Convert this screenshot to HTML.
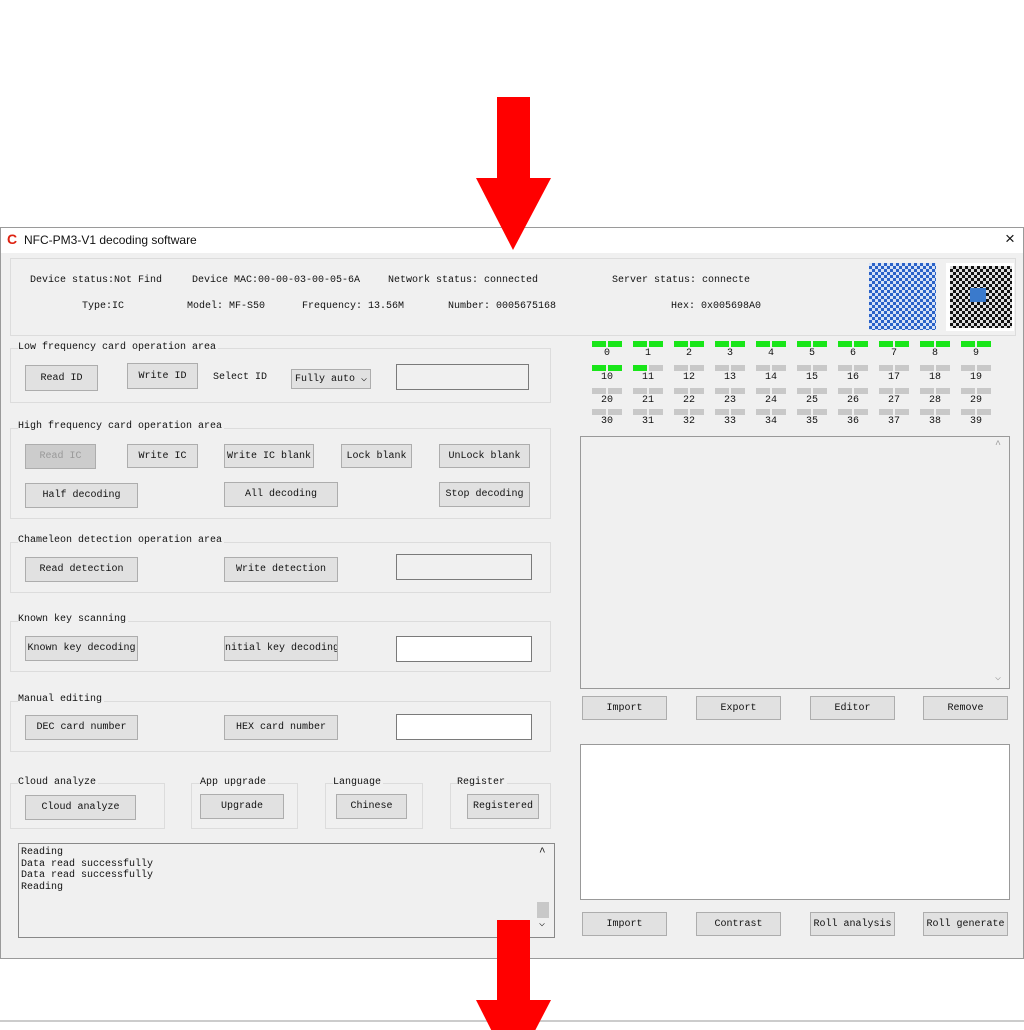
<!DOCTYPE html>
<html><head><meta charset="utf-8"><style>
*{margin:0;padding:0;box-sizing:border-box}
body{width:1024px;height:1024px;background:#fff;position:relative;overflow:hidden;font-family:"Liberation Mono","DejaVu Sans Mono",monospace;font-size:10px;color:#111}
.a{position:absolute}
.t{position:absolute;white-space:nowrap;font-size:10px}
.btn{position:absolute;background:#e1e1e1;border:1px solid #adadad;text-align:center;font-size:10px;white-space:nowrap;overflow:hidden;display:flex;align-items:center;justify-content:center}
.grp{position:absolute;border:1px solid #dcdcdc}
.lab{position:absolute;background:#f0f0f0;font-size:10px;white-space:nowrap;padding-right:2px}
.tb{position:absolute;background:#fff;border:1px solid #7a7a7a}
.s{position:absolute;width:14px;height:6px;background:#c8c8c8}
.g{background:#19e619}
.n{position:absolute;width:30px;text-align:center;font-size:10px}
.qr{position:absolute;background-image:conic-gradient(var(--c) 25%,transparent 0 50%,var(--c) 0 75%,transparent 0);background-size:6px 6px}
</style></head><body>
<!-- window -->
<div class="a" style="left:0;top:227px;width:1024px;height:732px;background:#f0f0f0;border:1px solid #9a9a9a"></div>
<div class="a" style="left:1px;top:228px;width:1022px;height:25px;background:#fff"></div>
<div class="t" style="left:7px;top:231px;font-family:'Liberation Sans',sans-serif;font-size:14px;color:#d21;font-weight:bold">C</div>
<div class="t" style="left:24px;top:233px;font-family:'Liberation Sans',sans-serif;font-size:12px">NFC-PM3-V1 decoding software</div>
<div class="t" style="left:1005px;top:229px;font-family:'Liberation Sans',sans-serif;font-size:17px">×</div>
<!-- top arrow -->
<div class="a" style="left:497px;top:97px;width:33px;height:84px;background:#f00"></div>
<svg class="a" style="left:476px;top:178px" width="76" height="74"><polygon points="0,0 75,0 37,72" fill="#f00"/></svg>
<!-- header group -->
<div class="grp" style="left:10px;top:258px;width:1006px;height:78px"></div>
<div class="t" style="left:30px;top:275px">Device status:Not Find</div>
<div class="t" style="left:192px;top:275px">Device MAC:00-00-03-00-05-6A</div>
<div class="t" style="left:388px;top:275px">Network status: connected</div>
<div class="t" style="left:612px;top:275px">Server status: connecte</div>
<div class="t" style="left:82px;top:301px">Type:IC</div>
<div class="t" style="left:187px;top:301px">Model: MF-S50</div>
<div class="t" style="left:302px;top:301px">Frequency:  13.56M</div>
<div class="t" style="left:448px;top:301px">Number:  0005675168</div>
<div class="t" style="left:671px;top:301px">Hex: 0x005698A0</div>
<div class="qr" style="--c:#2a62c8;left:869px;top:263px;width:67px;height:67px;background-color:#d6e2f6"></div>
<div class="a" style="left:946px;top:263px;width:68px;height:68px;background:#fff"></div>
<div class="qr" style="--c:#111;left:950px;top:266px;width:62px;height:62px;background-color:#ddd"></div>
<div class="a" style="left:970px;top:288px;width:16px;height:14px;background:#3a7acc"></div>
<!-- low freq -->
<div class="grp" style="left:10px;top:348px;width:541px;height:55px"></div>
<div class="lab" style="left:18px;top:342px">Low frequency card operation area</div>
<div class="btn" style="left:25px;top:365px;width:73px;height:26px">Read ID</div>
<div class="btn" style="left:127px;top:363px;width:71px;height:26px">Write ID</div>
<div class="t" style="left:213px;top:372px">Select ID</div>
<div class="btn" style="left:291px;top:369px;width:80px;height:20px">Fully auto ⌵</div>
<div class="tb" style="left:396px;top:364px;width:133px;height:26px;background:#f0f0f0"></div>
<!-- high freq -->
<div class="grp" style="left:10px;top:428px;width:541px;height:91px"></div>
<div class="lab" style="left:18px;top:421px">High frequency card operation area</div>
<div class="btn" style="left:25px;top:444px;width:71px;height:25px;color:#999;background:#ccc">Read IC</div>
<div class="btn" style="left:127px;top:444px;width:71px;height:24px">Write IC</div>
<div class="btn" style="left:224px;top:444px;width:90px;height:24px">Write IC blank</div>
<div class="btn" style="left:341px;top:444px;width:71px;height:24px">Lock blank</div>
<div class="btn" style="left:439px;top:444px;width:91px;height:24px">UnLock blank</div>
<div class="btn" style="left:25px;top:483px;width:113px;height:25px">Half decoding</div>
<div class="btn" style="left:224px;top:482px;width:114px;height:25px">All decoding</div>
<div class="btn" style="left:439px;top:482px;width:91px;height:25px">Stop decoding</div>
<!-- chameleon -->
<div class="grp" style="left:10px;top:542px;width:541px;height:51px"></div>
<div class="lab" style="left:18px;top:535px">Chameleon detection operation area</div>
<div class="btn" style="left:25px;top:557px;width:113px;height:25px">Read detection</div>
<div class="btn" style="left:224px;top:557px;width:114px;height:25px">Write detection</div>
<div class="tb" style="left:396px;top:554px;width:136px;height:26px;background:#f0f0f0"></div>
<!-- known key -->
<div class="grp" style="left:10px;top:621px;width:541px;height:51px"></div>
<div class="lab" style="left:18px;top:614px">Known key scanning</div>
<div class="btn" style="left:25px;top:636px;width:113px;height:25px">Known key decoding</div>
<div class="btn" style="left:224px;top:636px;width:114px;height:25px;justify-content:flex-start">nitial key decoding</div>
<div class="tb" style="left:396px;top:636px;width:136px;height:26px"></div>
<!-- manual -->
<div class="grp" style="left:10px;top:701px;width:541px;height:51px"></div>
<div class="lab" style="left:18px;top:694px">Manual editing</div>
<div class="btn" style="left:25px;top:715px;width:113px;height:25px">DEC card number</div>
<div class="btn" style="left:224px;top:715px;width:114px;height:25px">HEX card number</div>
<div class="tb" style="left:396px;top:714px;width:136px;height:26px"></div>
<!-- bottom groups -->
<div class="grp" style="left:10px;top:783px;width:155px;height:46px"></div>
<div class="lab" style="left:18px;top:777px">Cloud analyze</div>
<div class="btn" style="left:25px;top:795px;width:111px;height:25px">Cloud analyze</div>
<div class="grp" style="left:191px;top:783px;width:107px;height:46px"></div>
<div class="lab" style="left:200px;top:777px">App upgrade</div>
<div class="btn" style="left:200px;top:794px;width:84px;height:25px">Upgrade</div>
<div class="grp" style="left:325px;top:783px;width:98px;height:46px"></div>
<div class="lab" style="left:333px;top:777px">Language</div>
<div class="btn" style="left:336px;top:794px;width:71px;height:25px">Chinese</div>
<div class="grp" style="left:450px;top:783px;width:101px;height:46px"></div>
<div class="lab" style="left:457px;top:777px">Register</div>
<div class="btn" style="left:467px;top:794px;width:72px;height:25px">Registered</div>
<!-- log -->
<div class="tb" style="left:18px;top:843px;width:537px;height:95px;background:#f0f0f0;border-color:#888"></div>
<div class="t" style="left:21px;top:847px;line-height:11.5px">Reading<br>Data read successfully<br>Data read successfully<br>Reading</div>
<div class="t" style="left:539px;top:847px;font-size:11px">^</div>
<div class="a" style="left:537px;top:902px;width:12px;height:16px;background:#c8c8c8"></div>
<div class="t" style="left:539px;top:918px;font-size:10px">⌵</div>
<!-- sectors -->
<div id="sec"></div>
<!-- right lists -->
<div class="tb" style="left:580px;top:436px;width:430px;height:253px;background:#f0f0f0;border-color:#999"></div>
<div class="t" style="left:995px;top:440px;color:#999">^</div>
<div class="t" style="left:995px;top:672px;color:#999">⌵</div>
<div class="btn" style="left:582px;top:696px;width:85px;height:24px">Import</div>
<div class="btn" style="left:696px;top:696px;width:85px;height:24px">Export</div>
<div class="btn" style="left:810px;top:696px;width:85px;height:24px">Editor</div>
<div class="btn" style="left:923px;top:696px;width:85px;height:24px">Remove</div>
<div class="tb" style="left:580px;top:744px;width:430px;height:156px;border-color:#999"></div>
<div class="btn" style="left:582px;top:912px;width:85px;height:24px">Import</div>
<div class="btn" style="left:696px;top:912px;width:85px;height:24px">Contrast</div>
<div class="btn" style="left:810px;top:912px;width:85px;height:24px">Roll analysis</div>
<div class="btn" style="left:923px;top:912px;width:85px;height:24px">Roll generate</div>
<!-- bottom arrow -->
<div class="a" style="left:0;top:1020px;width:1024px;height:2px;background:#ccc"></div>
<div class="a" style="left:497px;top:920px;width:33px;height:82px;background:#f00"></div>
<svg class="a" style="left:476px;top:1000px" width="76" height="30"><polygon points="0,0 75,0 37,73" fill="#f00"/></svg>
<script>
var h='',ry=[341,365,388,409];
for(var r=0;r<4;r++)for(var c=0;c<10;c++){var i=r*10+c,x=592+c*41,y=ry[r];
var g1=i<=11,g2=i<=10;
h+='<div class="s'+(g1?' g':'')+'" style="left:'+x+'px;top:'+y+'px"></div>';
h+='<div class="s'+(g2?' g':'')+'" style="left:'+(x+16)+'px;top:'+y+'px"></div>';
h+='<div class="n" style="left:'+x+'px;top:'+(y+7)+'px">'+i+'</div>';}
document.getElementById('sec').innerHTML=h;
</script>
</body></html>
